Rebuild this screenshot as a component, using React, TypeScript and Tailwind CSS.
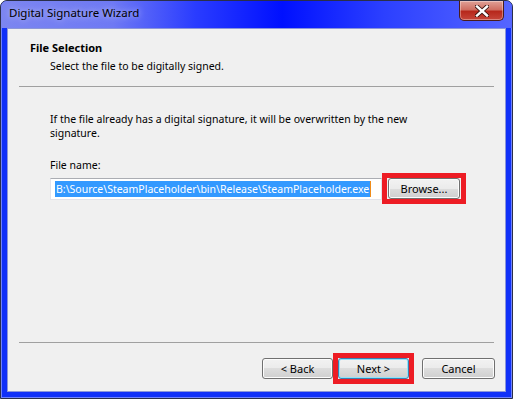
const font = { fontFamily: '"Noto Sans", "Segoe UI", sans-serif' };

function WinButton({
  label,
  focused = false,
  width,
}: {
  label: string;
  focused?: boolean;
  width: string;
}) {
  const border = focused
    ? "border-[#3c7fb1] shadow-[inset_0_0_0_1px_#8fe3fa]"
    : "border-[#707070] shadow-[inset_0_0_0_1px_#fcfcfc]";
  return (
    <button
      type="button"
      className={`flex h-[21px] items-center justify-center rounded-[3px] border bg-[linear-gradient(to_bottom,#f2f2f2_0%,#ebebeb_50%,#dddddd_50%,#cfcfcf_100%)] text-[11px] leading-none text-black ${border} ${width}`}
    >
      {label}
    </button>
  );
}

function CloseButton() {
  return (
    <div className="mr-[8px] flex h-[20px] w-[45px] items-center justify-center rounded-b-[5px] border border-t-0 border-[#4a1c1a] bg-[linear-gradient(to_bottom,#e0a197_0%,#cf6f62_45%,#b7281c_55%,#c6463a_100%)] shadow-[inset_0_0_0_1px_rgba(255,255,255,0.35)]">
      <svg width="14" height="12" viewBox="0 0 14 12">
        <path
          d="M2 1.5 L12 10.5 M12 1.5 L2 10.5"
          stroke="#3a1512"
          strokeWidth="4.2"
          strokeLinecap="square"
        />
        <path
          d="M2 1.5 L12 10.5 M12 1.5 L2 10.5"
          stroke="#ffffff"
          strokeWidth="2.4"
          strokeLinecap="square"
        />
      </svg>
    </div>
  );
}

export default function App() {
  return (
    <div
      className="flex h-[399px] w-[513px] flex-col overflow-hidden rounded-t-[7px] border border-[#2a2f4a] bg-[#1030f8] shadow-[inset_0_0_0_1px_rgba(190,200,255,0.55)]"
      style={font}
    >
      <div className="flex h-[27px] shrink-0 items-start justify-between bg-[linear-gradient(to_right,#7c86f0_0%,#6e79f4_22%,#2a3cff_38%,#0010ff_55%,#2c40ff_75%,#5666ff_100%)]">
        <div className="pl-[8px] pt-[6px] text-[11.5px] leading-none text-black [text-shadow:0_0_6px_rgba(255,255,255,0.7)]">
          Digital Signature Wizard
        </div>
        <CloseButton />
      </div>

      <div className="mx-[6px] mb-[6px] flex flex-1 flex-col border border-[#8c96d8] bg-[#f0f0f0] text-[10.5px] text-black">
        <div className="pl-[22px] pt-[11px]">
          <div className="text-[11px] font-bold leading-[15px]">File Selection</div>
          <div className="pl-[20px] pt-[4px] leading-[15px]">
            Select the file to be digitally signed.
          </div>
        </div>
        <div className="mx-[11px] mt-[12px] h-px bg-[#a0a0a0]" />

        <div className="flex flex-1 flex-col pl-[42px] pt-[25px]">
          <p className="w-[370px] leading-[14px]">
            If the file already has a digital signature, it will be overwritten
            by the new signature.
          </p>
          <div className="pt-[18px] leading-[14px]">File name:</div>
          <div className="mt-[1px] flex items-center">
            <div className="flex h-[22px] w-[332px] items-center border border-[#e2e3ea] border-t-[#abadb3] bg-white pl-[4px]">
              <span className="border-r border-[#f08c1a] bg-[#3399ff] px-px leading-[16px] text-white">
                B:\Source\SteamPlaceholder\bin\Release\SteamPlaceholder.exe
              </span>
            </div>
            <div className="border-[5px] border-[#ed1c24] px-px">
              <WinButton label="Browse..." width="w-[72px]" />
            </div>
          </div>
        </div>

        <div className="mx-[11px] h-px bg-[#a0a0a0]" />
        <div className="flex items-center justify-end pb-[7px] pr-[10px] pt-[10px]">
          <WinButton label="< Back" width="w-[71px]" />
          <div className="border-[5px] border-[#ed1c24]">
            <WinButton label="Next >" focused width="w-[71px]" />
          </div>
          <div className="w-[8px]" />
          <WinButton label="Cancel" width="w-[73px]" />
        </div>
      </div>
    </div>
  );
}
